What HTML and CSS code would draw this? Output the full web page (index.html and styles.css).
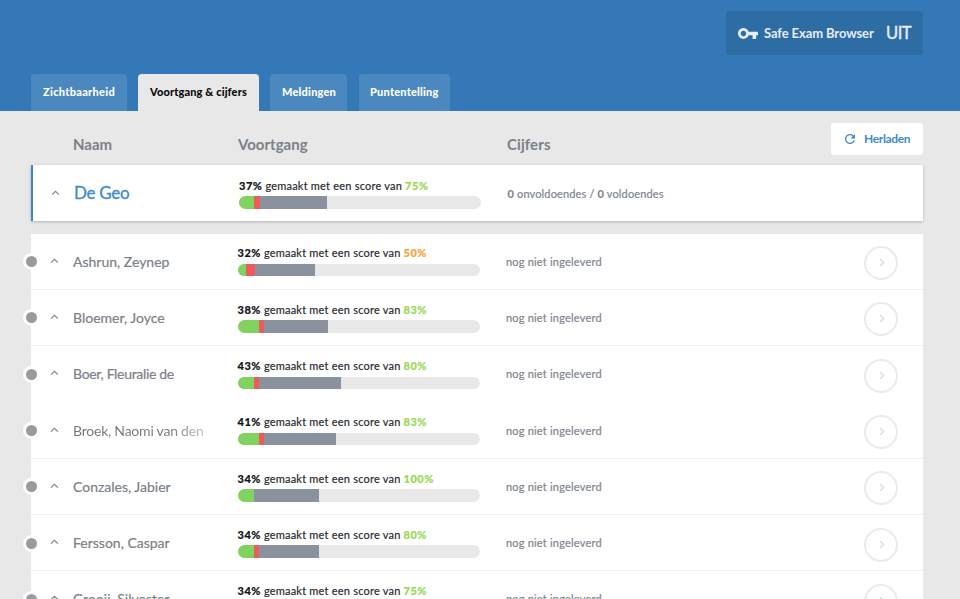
FILE: index.html
```html
<!DOCTYPE html>
<html lang="nl">
<head>
<meta charset="utf-8">
<title>Voortgang &amp; cijfers</title>
<link rel="stylesheet" href="styles.css">
</head>
<body>
<svg class="defs" width="0" height="0">
  <symbol id="up" viewBox="0 0 10 6"><path d="M1.2 4.8 5 1.2l3.8 3.6" fill="none" stroke="currentColor" stroke-width="1.4"/></symbol>
  <symbol id="next" viewBox="0 0 6 9"><path d="M1.2 1 4.6 4.5 1.2 8" fill="none" stroke="currentColor" stroke-width="1.5"/></symbol>
</svg>
<header class="top">
  <div class="seb">
    <svg class="key" viewBox="1 6 22 12"><path fill="currentColor" d="M12.65 10C11.83 7.67 9.61 6 7 6c-3.31 0-6 2.69-6 6s2.69 6 6 6c2.61 0 4.83-1.67 5.65-4H17v4h4v-4h2v-4H12.65zM7 15c-1.65 0-3-1.35-3-3s1.35-3 3-3 3 1.350 3 3-1.350 3-3 3z"/></svg>
    <span class="seb-name">Safe Exam Browser</span><span class="seb-state">UIT</span>
  </div>
  <nav class="tabs">
    <a class="tab t1"><span>Zichtbaarheid</span></a>
    <a class="tab t2 active"><span>Voortgang &amp; cijfers</span></a>
    <a class="tab t3"><span>Meldingen</span></a>
    <a class="tab t4"><span>Puntentelling</span></a>
  </nav>
</header>
<main>
  <div class="heads">
    <h2 class="h-name">Naam</h2><h2 class="h-prog">Voortgang</h2><h2 class="h-grade">Cijfers</h2>
    <button class="reload"><svg viewBox="4 4 16 16"><path fill="currentColor" d="M17.650 6.350C16.200 4.900 14.210 4 12 4c-4.420 0-7.990 3.580-7.990 8s3.570 8 7.990 8c3.730 0 6.840-2.550 7.730-6h-2.080c-.82 2.330-3.040 4-5.650 4-3.310 0-6-2.690-6-6s2.690-6 6-6c1.660 0 3.140.69 4.220 1.780L13 11h7V4l-2.350 2.350z"/></svg><span>Herladen</span></button>
  </div>
  <section class="group">
    <svg class="up"><use href="#up"/></svg>
    <div class="name">De Geo</div>
    <div class="prog"><p><b>37%</b> gemaakt met een score van <b class="good">75%</b></p><div class="bar"><i class="ok" style="width:15.3px"></i><i class="bad" style="width:5.7px"></i><i class="done" style="width:67.5px"></i></div></div>
    <div class="grade"><b>0</b> onvoldoendes / <b>0</b> voldoendes</div>
  </section>
  <section class="list">
    <div class="row"><span class="dot"></span><svg class="up"><use href="#up"/></svg><div class="name">Ashrun, Zeynep</div><div class="prog"><p><b>32%</b> gemaakt met een score van <b class="mid">50%</b></p><div class="bar"><i class="ok" style="width:8.5px"></i><i class="bad" style="width:8.5px"></i><i class="done" style="width:60.8px"></i></div></div><div class="grade">nog niet ingeleverd</div><a class="go"><svg><use href="#next"/></svg></a></div>
    <div class="row"><span class="dot"></span><svg class="up"><use href="#up"/></svg><div class="name">Bloemer, Joyce</div><div class="prog"><p><b>38%</b> gemaakt met een score van <b class="good">83%</b></p><div class="bar"><i class="ok" style="width:21.3px"></i><i class="bad" style="width:5px"></i><i class="done" style="width:64.5px"></i></div></div><div class="grade">nog niet ingeleverd</div><a class="go"><svg><use href="#next"/></svg></a></div>
    <div class="row plain"><span class="dot"></span><svg class="up"><use href="#up"/></svg><div class="name tight">Boer, Fleuralie de</div><div class="prog"><p><b>43%</b> gemaakt met een score van <b class="good">80%</b></p><div class="bar"><i class="ok" style="width:16.8px"></i><i class="bad" style="width:5px"></i><i class="done" style="width:82px"></i></div></div><div class="grade">nog niet ingeleverd</div><a class="go"><svg><use href="#next"/></svg></a></div>
    <div class="row"><span class="dot"></span><svg class="up"><use href="#up"/></svg><div class="name tight fade">Broek, Naomi van den</div><div class="prog"><p><b>41%</b> gemaakt met een score van <b class="good">83%</b></p><div class="bar"><i class="ok" style="width:21.3px"></i><i class="bad" style="width:5px"></i><i class="done" style="width:72.7px"></i></div></div><div class="grade">nog niet ingeleverd</div><a class="go"><svg><use href="#next"/></svg></a></div>
    <div class="row"><span class="dot"></span><svg class="up"><use href="#up"/></svg><div class="name">Conzales, Jabier</div><div class="prog"><p><b>34%</b> gemaakt met een score van <b class="good">100%</b></p><div class="bar"><i class="ok" style="width:16.8px"></i><i class="done" style="width:64.8px"></i></div></div><div class="grade">nog niet ingeleverd</div><a class="go"><svg><use href="#next"/></svg></a></div>
    <div class="row"><span class="dot"></span><svg class="up"><use href="#up"/></svg><div class="name">Fersson, Caspar</div><div class="prog"><p><b>34%</b> gemaakt met een score van <b class="good">80%</b></p><div class="bar"><i class="ok" style="width:16.8px"></i><i class="bad" style="width:4.7px"></i><i class="done" style="width:60.1px"></i></div></div><div class="grade">nog niet ingeleverd</div><a class="go"><svg><use href="#next"/></svg></a></div>
    <div class="row"><span class="dot"></span><svg class="up"><use href="#up"/></svg><div class="name">Grooij, Silvester</div><div class="prog"><p><b>34%</b> gemaakt met een score van <b class="good">75%</b></p><div class="bar"><i class="ok" style="width:15.3px"></i><i class="bad" style="width:5.7px"></i><i class="done" style="width:60.6px"></i></div></div><div class="grade">nog niet ingeleverd</div><a class="go"><svg><use href="#next"/></svg></a></div>
  </section>
</main>
</body>
</html>
```
FILE: styles.css
```css
* { box-sizing: border-box; }
body { margin: 0; height: 599px; overflow: hidden; background: #e8e8e8; font-family: Lato, "Liberation Sans", sans-serif; color: #7c8087; }
.defs { position: absolute; }
p, h2 { margin: 0; }
svg { display: block; flex: none; }
.top { height: 111px; background: #3478b8; display: flex; flex-direction: column; align-items: flex-end; justify-content: space-between; padding: 11px 37px 0 31px; }
.seb { width: 197px; height: 44px; border-radius: 3px; background: #2e6ca4; color: #e4edf6; display: flex; align-items: center; padding-left: 12px; white-space: nowrap; }
.key { width: 20px; height: 11px; margin-right: 6px; }
.seb-name { width: 122px; font-size: 13px; font-weight: 700; letter-spacing: -.1px; }
.seb-state { font-size: 16.5px; line-height: 20px; letter-spacing: -.5px; -webkit-text-stroke: .4px; }
.tabs { display: flex; align-self: flex-start; }
.tab { height: 37px; padding: 0 0 2px 12px; display: flex; align-items: center; font-size: 11px; font-weight: 900; letter-spacing: .2px; color: #fff; background: #4b88c0; border-radius: 4px 4px 0 0; white-space: nowrap; }
.tab.active { color: #08090b; background: #e8e8e8; letter-spacing: .13px; }
.t1 { width: 96px; margin-right: 11px; letter-spacing: .3px; }
.t2 { width: 121px; margin-right: 11px; }
.t3 { width: 77px; margin-right: 12px; }
.t4 { width: 91px; padding-left: 11px; }
main { padding: 0 37px 0 31px; }
.heads { height: 54px; display: flex; padding: 12px 0 0 42px; }
h2 { font-size: 15px; line-height: 20px; font-weight: 700; padding-top: 11px; }
.h-name { width: 165px; }
.h-prog { width: 269px; }
.h-grade { flex: 1; letter-spacing: .1px; }
.reload { width: 92px; height: 32px; border: 0; border-radius: 3px; background: #fff; color: #3d8cc9; display: flex; align-items: center; padding: 0 0 0 14px; font: 700 12px Lato, sans-serif; letter-spacing: -.35px; }
.reload svg { width: 10px; height: 10px; margin-right: 9px; }
.reload span { padding-bottom: 2px; }
.group, .row { display: flex; background: #fff; white-space: nowrap; }
.group { height: 56px; border-left: 2.5px solid #3d86c4; box-shadow: 0 1px 3px rgba(0,0,0,.22); padding-left: 18px; }
.up { width: 9px; height: 6px; color: #85898e; }
.group .up { margin: 25px 14px 0 0; }
.group .name { width: 165px; font-size: 17px; line-height: 56px; letter-spacing: -.3px; -webkit-text-stroke: .3px; color: #3d8cc9; }
.prog { width: 268.5px; }
.prog p { font-size: 11px; line-height: 14px; letter-spacing: .21px; -webkit-text-stroke: .15px; color: #24272c; }
.prog b { font-weight: 900; letter-spacing: .5px; color: #111418; }
.prog .good { color: #99da55; }
.prog .mid { color: #f7a23b; }
.group .prog { padding-top: 13.5px; }
.bar { width: 242px; height: 12.5px; border-radius: 7px; background: #e8e8e8; overflow: hidden; display: flex; margin-top: 3.5px; }
.ok { background: #7fd35e; }
.bad { background: #ee5b5b; }
.done { background: #8a929e; }
.grade { font-size: 11px; line-height: 57px; letter-spacing: .15px; -webkit-text-stroke: .2px; color: #808690; }
.list { margin-top: 12.7px; }
.row { height: 56.3px; border-bottom: 1px solid #efefef; }
.row.plain { border-color: #fff; }
.dot { width: 17px; height: 17px; border-radius: 50%; border: 3.5px solid #fff; background: #979ba0; margin: 19.5px 10.5px 0 -8.5px; }
.row .up { margin: 24px 14px 0 0; }
.row .name { width: 164.5px; font-size: 14px; line-height: 55.5px; letter-spacing: 0; -webkit-text-stroke: .2px; }
.row .name.tight { letter-spacing: -.32px; }
.row .name.fade { -webkit-text-stroke: 0; width: 135px; margin-right: 29.5px; letter-spacing: -.22px; background: linear-gradient(90deg, #73777e 70%, #c5c7ca); background-clip: text; color: transparent; }
.row .prog { padding-top: 12.8px; }
.row .grade { width: 358px; line-height: 55.5px; letter-spacing: .2px; }
.go { width: 34px; height: 34px; border-radius: 50%; border: 2px solid #ebebeb; color: #dedede; margin-top: 12.5px; padding: 10px 0 0 12.5px; }
.go svg { width: 6px; height: 9px; }
```
